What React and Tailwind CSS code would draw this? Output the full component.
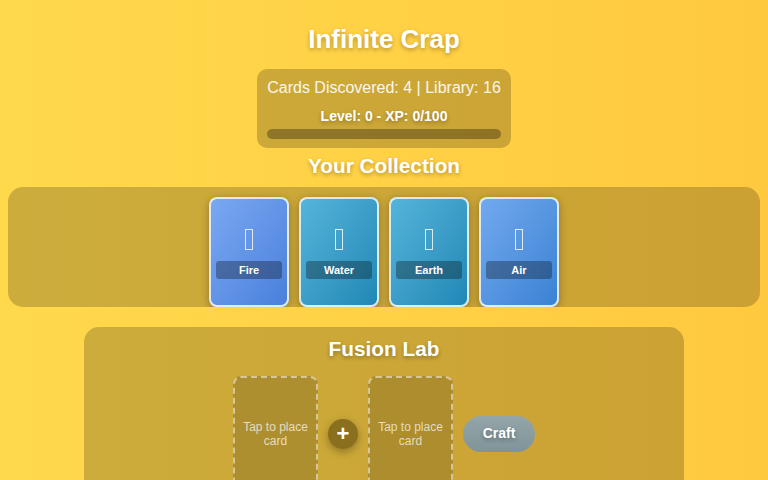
import React from "react";

const cards = [
  { name: "Fire", emoji: "🔥", bg: "bg-gradient-to-br from-[#7aa8f2] to-[#4a80dc]" },
  { name: "Water", emoji: "💧", bg: "bg-gradient-to-br from-[#55b4da] to-[#1f88b6]" },
  { name: "Earth", emoji: "🌍", bg: "bg-gradient-to-br from-[#55b4da] to-[#1f88b6]" },
  { name: "Air", emoji: "💨", bg: "bg-gradient-to-br from-[#72a9ee] to-[#3a82d4]" },
];

const shadow = "[text-shadow:0_2px_4px_rgba(0,0,0,0.3)]";

export default function App() {
  return (
    <div className="min-h-screen w-full overflow-hidden bg-gradient-to-r from-[#ffd94c] to-[#ffc93f] font-['Liberation_Sans',Arial,sans-serif] text-white px-2 pt-[22px]">
      <h1 className={`text-center text-[26px] font-bold leading-[34px] ${shadow}`}>Infinite Crap</h1>

      {/* stats */}
      <div className="flex justify-center mt-[13px]">
        <div className="bg-black/20 rounded-[10px] px-[10px] pt-[9px] pb-[9px] w-[254px]">
          <div className="text-[16px] leading-[20px] text-center text-white/90">Cards Discovered: 4 | Library: 16</div>
          <div className={`text-[14px] font-bold leading-[16px] text-center mt-[10px] ${shadow}`}>Level: 0 - XP: 0/100</div>
          <div className="h-[10px] rounded-full bg-black/30 mt-[5px]"></div>
        </div>
      </div>

      <h2 className={`text-center text-[20.8px] font-bold leading-[23px] mt-[6px] ${shadow}`}>Your Collection</h2>

      {/* collection */}
      <div className="mt-[10px] bg-black/20 rounded-[15px] h-[120px] overflow-hidden pt-[10px] flex justify-center gap-[10px]">
        {cards.map((c) => (
          <div
            key={c.name}
            className={`${c.bg} w-[80px] h-[110px] shrink-0 rounded-[8px] border-2 border-white/80 shadow-[0_2px_8px_rgba(0,0,0,0.3)] flex flex-col items-center pt-[30px] px-[5px]`}
          >
            {/* emoji renders as a missing-glyph box in the reference */}
            <span aria-label={c.emoji} className="block w-[8px] h-[21px] border-[1.5px] border-white/80"></span>
            <div className="mt-[11px] w-full h-[18px] rounded-[3px] bg-black/30 text-[11px] font-bold leading-[18px] text-center">
              {c.name}
            </div>
          </div>
        ))}
      </div>

      {/* fusion lab */}
      <div className="mx-auto mt-[20px] w-[600px] bg-black/20 rounded-[15px] pt-[10px] pb-[20px]">
        <h2 className={`text-center text-[20.8px] font-bold leading-[23px] ${shadow}`}>Fusion Lab</h2>
        <div className="flex justify-center items-center gap-[10px] mt-[16px]">
          <div className="w-[85px] h-[115px] rounded-[8px] border-2 border-dashed border-white/50 bg-black/15 flex items-center justify-center text-center text-[12px] leading-[14px] text-white/70">
            Tap to place<br />card
          </div>
          <div className="w-[30px] h-[30px] rounded-full bg-[#8a6f1e] shadow-[0_3px_8px_rgba(0,0,0,0.3)] flex items-center justify-center text-[22px] font-bold leading-none">
            +
          </div>
          <div className="w-[85px] h-[115px] rounded-[8px] border-2 border-dashed border-white/50 bg-black/15 flex items-center justify-center text-center text-[12px] leading-[14px] text-white/70">
            Tap to place<br />card
          </div>
          <button className={`w-[72px] h-[36px] rounded-full bg-gradient-to-b from-[#95a5a8] to-[#7f9499] text-[14px] font-bold ${shadow}`}>
            Craft
          </button>
        </div>
      </div>
    </div>
  );
}
